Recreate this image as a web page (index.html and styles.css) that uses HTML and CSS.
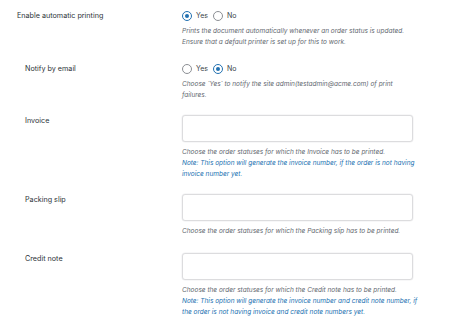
FILE: index.html
```html
<!DOCTYPE html>
<html lang="en">
<head>
<meta charset="utf-8">
<title>Automatic printing settings</title>
<link rel="stylesheet" href="styles.css">
</head>
<body>
<form class="settings">
  <div class="row row-radio">
    <div class="label">Enable automatic printing</div>
    <div class="field">
      <div class="radios">
        <label class="opt"><input type="radio" name="auto" checked><span>Yes</span></label>
        <label class="opt"><input type="radio" name="auto"><span>No</span></label>
      </div>
      <p class="help">Prints the document automatically whenever an order status is updated.<br>Ensure that a default printer is set up for this to work.</p>
    </div>
  </div>

  <div class="row row-radio sub">
    <div class="label">Notify by email</div>
    <div class="field">
      <div class="radios">
        <label class="opt"><input type="radio" name="notify"><span>Yes</span></label>
        <label class="opt"><input type="radio" name="notify" checked><span>No</span></label>
      </div>
      <p class="help">Choose `Yes` to notify the site admin(testadmin@acme.com) of print<br>failures.</p>
    </div>
  </div>

  <div class="row sub">
    <div class="label">Invoice</div>
    <div class="field">
      <div class="select"></div>
      <p class="help">Choose the order statuses for which the Invoice has to be printed.<br><span class="note">Note: This option will generate the invoice number, if the order is not having<br>invoice number yet.</span></p>
    </div>
  </div>

  <div class="row sub">
    <div class="label">Packing slip</div>
    <div class="field">
      <div class="select"></div>
      <p class="help">Choose the order statuses for which the Packing slip has to be printed.</p>
    </div>
  </div>

  <div class="row sub row-last">
    <div class="label">Credit note</div>
    <div class="field">
      <div class="select"></div>
      <p class="help">Choose the order statuses for which the Credit note has to be printed.<br><span class="note">Note: This option will generate the invoice number and credit note number, if<br>the order is not having invoice and credit note numbers yet.</span></p>
    </div>
  </div>
</form>
</body>
</html>
```

FILE: styles.css
```css
html, body {
  margin: 0;
  padding: 0;
  background: #ffffff;
}

body {
  font-family: Inter, "Noto Sans", "Liberation Sans", sans-serif;
  color: #3c434a;
  width: 474px;
  height: 322px;
  overflow: hidden;
}

.settings {
  display: flex;
  flex-direction: column;
  gap: 14px;
  padding: 10px 0 0 17px;
  margin: 0;
}

.row {
  display: grid;
  grid-template-columns: 165px 231px;
  align-items: start;
}

.label {
  font-size: 7.2px;
  line-height: 11px;
  color: #2c3338;
}

.row-radio .label {
  line-height: 12px;
}

.sub .label {
  padding-left: 8px;
}

.radios {
  display: flex;
  align-items: center;
  gap: 5px;
  height: 12px;
}

.opt {
  display: flex;
  align-items: center;
  gap: 4px;
  font-size: 7px;
  line-height: 12px;
  color: #3c434a;
}

.opt input {
  appearance: none;
  -webkit-appearance: none;
  margin: 0;
  width: 10px;
  height: 10px;
  border: 1px solid #8c8f94;
  border-radius: 50%;
  background: #fff;
  box-sizing: border-box;
  display: grid;
  place-items: center;
}

.opt input:checked {
  border-color: #2271b1;
}

.opt input:checked::before {
  content: "";
  width: 4px;
  height: 4px;
  border-radius: 50%;
  background: #2271b1;
}

.help {
  margin: 4px 0 0;
  font-size: 6.5px;
  line-height: 11px;
  font-style: italic;
  color: #646970;
  white-space: nowrap;
}

.row-radio + .row-radio {
  margin-top: 1px;
}

.row-last {
  margin-top: 2px;
}

.note {
  color: #2271b1;
}

.select {
  height: 27px;
  box-sizing: border-box;
  border: 1px solid #dcdcde;
  border-radius: 3px;
  background: #fff;
  box-shadow: 0 0 0 0.5px #f0f0f1;
}

.select + .help {
  margin-top: 5px;
}
```
